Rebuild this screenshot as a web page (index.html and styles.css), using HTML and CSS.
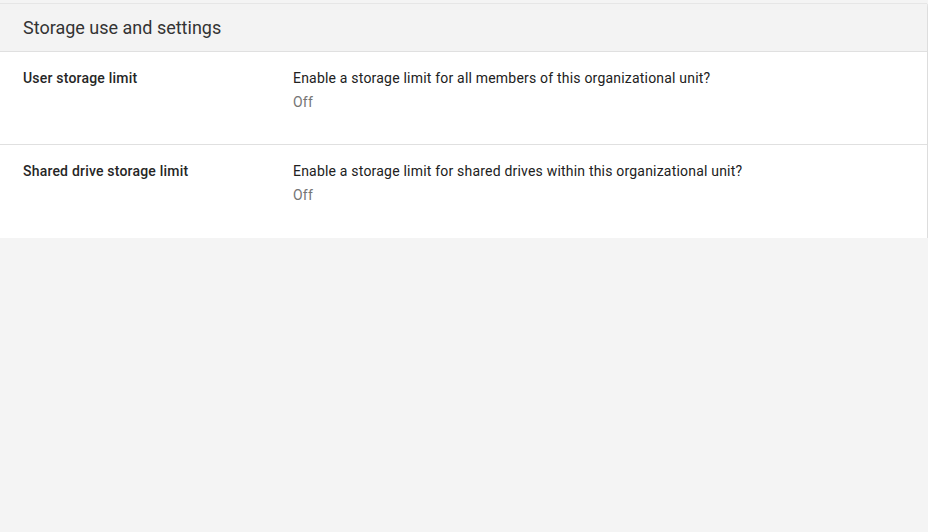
FILE: index.html
```html
<!DOCTYPE html>
<html>
<head>
<meta charset="utf-8">
<link rel="stylesheet" href="styles.css">
</head>
<body>
<div class="page">
  <section class="card">
    <header class="card-header">Storage use and settings</header>
    <div class="row">
      <div class="label">User storage limit</div>
      <div class="setting">
        <div class="question">Enable a storage limit for all members of this organizational unit?</div>
        <div class="value">Off</div>
      </div>
    </div>
    <div class="row">
      <div class="label">Shared drive storage limit</div>
      <div class="setting">
        <div class="question">Enable a storage limit for shared drives within this organizational unit?</div>
        <div class="value">Off</div>
      </div>
    </div>
  </section>
</div>
</body>
</html>
```
FILE: styles.css
```css
html, body {
  margin: 0;
  padding: 0;
  background: #f4f4f4;
  font-family: Roboto, "Liberation Sans", sans-serif;
}
.page {
  padding: 3px 1px 0 0;
}
.card {
  background: #fff;
  box-shadow: 0 1px 0 #c8c8c8, 0 2px 3px rgba(0,0,0,0.12), 0 0 1px rgba(0,0,0,0.3);
}
.card-header {
  background: #f3f3f3;
  height: 48px;
  line-height: 48px;
  padding-left: 23px;
  font-size: 18px;
  color: #333;
  border-bottom: 1px solid #e0e0e0;
  box-sizing: border-box;
  margin-top: 1px;
}
.row {
  display: flex;
  padding: 16px 0 32px 23px;
  border-bottom: 1px solid #e0e0e0;
  letter-spacing: 0.2px;
}
.row:last-child {
  border-bottom: none;
  padding-bottom: 33px;
}
.label {
  width: 270px;
  flex: none;
  font-size: 14px;
  line-height: 20px;
  font-weight: 500;
  color: #262626;
}
.setting {
  display: flex;
  flex-direction: column;
  gap: 4px;
}
.question {
  font-size: 14px;
  line-height: 20px;
  color: #212121;
}
.value {
  font-size: 14px;
  line-height: 20px;
  color: #757575;
}
```
